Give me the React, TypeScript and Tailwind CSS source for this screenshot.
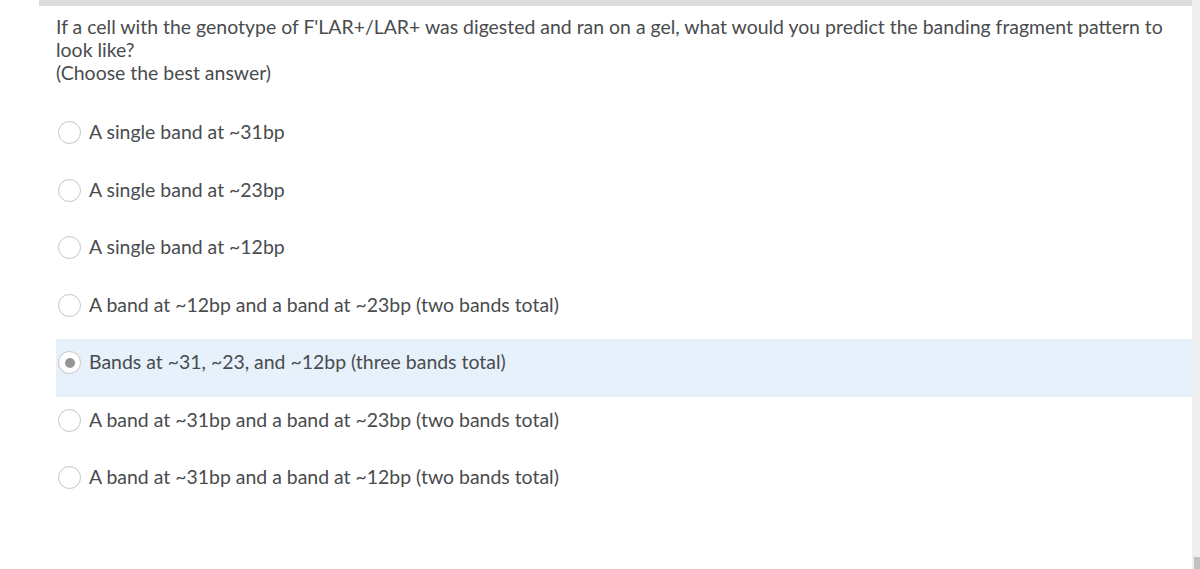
import React from "react";

const options = [
  "A single band at ~31bp",
  "A single band at ~23bp",
  "A single band at ~12bp",
  "A band at ~12bp and a band at ~23bp (two bands total)",
  "Bands at ~31, ~23, and ~12bp (three bands total)",
  "A band at ~31bp and a band at ~23bp (two bands total)",
  "A band at ~31bp and a band at ~12bp (two bands total)",
];

export default function App() {
  return (
    <div className="flex h-[569px] w-[1200px] bg-white text-[#494c4e]" style={{ fontFamily: "Lato, 'Noto Sans', sans-serif" }}>
      <div className="flex w-[1192px] flex-col">
        <div className="ml-[39px] h-[6px] bg-[#dcdcdc]" />
        <div className="pl-[56px] pr-[20px] pt-[9px] text-[19.45px] leading-[23px]">
          <p>
            If a cell with the genotype of F'LAR+/LAR+ was digested and ran on a gel, what would you predict the banding fragment pattern to look like?
          </p>
          <p>(Choose the best answer)</p>
        </div>
        <div className="mt-[25px] flex flex-col pl-[56px]">
          {options.map((o, i) => {
            const sel = i === 4;
            return (
              <div key={i} className={`flex h-[57.5px] items-start gap-[8px] pl-[2px] pt-[11px] ${sel ? "bg-[#e7f1fb]" : ""}`}>
                <span className="mt-[1px] flex h-[23px] w-[23px] items-center justify-center rounded-full border border-[#c4c4c4] bg-white">
                  {sel && <span className="h-[10px] w-[10px] rounded-full bg-[#959595]" />}
                </span>
                <span className="text-[19.45px] leading-[23px]">{o}</span>
              </div>
            );
          })}
        </div>
      </div>
      <div className="relative w-[8px] bg-[#efefef]">
        <div className="absolute bottom-0 left-[2px] h-[12px] w-[6px] bg-[#c1c1c1]" />
      </div>
    </div>
  );
}
